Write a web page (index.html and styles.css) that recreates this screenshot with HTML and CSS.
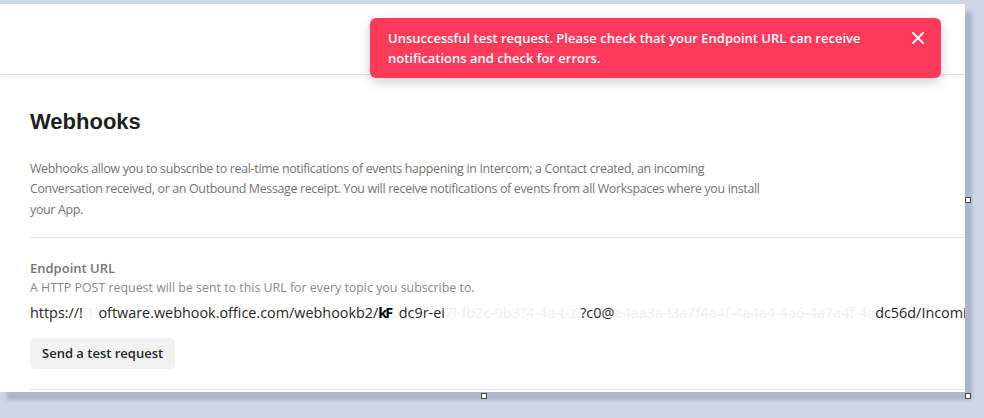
FILE: index.html
```html
<!DOCTYPE html>
<html lang="en">

<head>
    <meta charset="UTF-8">
    <meta name="viewport" content="width=device-width, initial-scale=1.0">
    <title>Webhooks</title>
    <link rel="stylesheet" href="styles.css">
</head>

<body>

    <div class="canvas">
        <div class="shot">
            <header class="topbar"></header>

            <div class="toast">
                <p>Unsuccessful test request. Please check that your Endpoint URL can receive notifications and check for errors.</p>
                <button class="toast-close" aria-label="Close">
                    <svg width="12" height="12" viewBox="0 0 12 12">
                        <path d="M1 1 L11 11 M11 1 L1 11" stroke="#fff" stroke-width="1.8" stroke-linecap="round" />
                    </svg>
                </button>
            </div>

            <main class="content">
                <h1>Webhooks</h1>
                <p class="intro">Webhooks allow you to subscribe to real-time notifications of events happening in Intercom; a Contact created, an incoming Conversation received, or an Outbound Message receipt. You will receive notifications of events from all Workspaces where you install your App.</p>

                <hr class="divider">

                <section class="endpoint">
                    <h2>Endpoint URL</h2>
                    <p class="hint">A HTTP POST request will be sent to this URL for every topic you subscribe to.</p>
                    <div class="url">https://!<span class="mask">l1l</span>oftware.webhook.office.com/webhookb2/<span class="ink">kF</span><span class="mask">..</span>dc9r-ei<span class="mask">7l-f</span><span class="mask">b2c-9b3?4-4a-t-zi</span>?c0@<span class="mask">e4aa3a-l3a7f4a4f-4a4a4-4a6-4a7a4f-4a</span>dc56d/Incomin</div>
                    <button class="btn">Send a test request</button>
                </section>

                <hr class="divider">
            </main>
        </div>

        <span class="handle handle-side"></span>
        <span class="handle handle-bottom"></span>
        <span class="handle handle-corner"></span>
    </div>

</body>

</html>
```

FILE: styles.css
```css
* {
    box-sizing: border-box;
}

body {
    margin: 0;
    padding-top: 4px;
    background-color: #cdd6e5;
    font-family: "Open Sans", "Noto Sans", sans-serif;
    overflow: hidden;
}

.canvas {
    position: relative;
    width: 984px;
    height: 414px;
}

.shot {
    position: relative;
    width: 965px;
    height: 388px;
    background-color: #ffffff;
    overflow: hidden;
    box-shadow: 7px 8px 3px rgba(110, 125, 155, 0.35);
}

.topbar {
    height: 71px;
    border-bottom: 1px solid #e2e2e2;
    box-shadow: 0 1px 4px rgba(0, 0, 0, 0.06);
}

/* error toast */
.toast {
    position: absolute;
    top: 14px;
    left: 370px;
    width: 571px;
    height: 60px;
    display: flex;
    align-items: flex-start;
    padding: 10px 17px 10px 18px;
    background-color: #ff3a5b;
    border-radius: 6px;
    box-shadow: 0 4px 12px rgba(0, 0, 0, 0.18);
    color: #ffffff;
}

.toast p {
    margin: 0;
    max-width: 510px;
    font-size: 13px;
    font-weight: 600;
    line-height: 20px;
}

.toast-close {
    margin-left: auto;
    margin-top: 4px;
    padding: 0;
    border: 0;
    background: none;
    line-height: 0;
}

.content {
    padding: 0 0 0 30px;
}

.content h1 {
    margin: 34px 0 0;
    font-family: "Liberation Sans", Arial, sans-serif;
    font-size: 22px;
    font-weight: bold;
    line-height: 26px;
    color: #1f1f1f;
}

.intro {
    max-width: 742px;
    margin: 24px 0 0;
    font-size: 12.4px;
    letter-spacing: -0.32px;
    line-height: 20.3px;
    color: #737373;
}

.divider {
    margin: 17px 0 0;
    border: 0;
    border-top: 1px solid #e6e6e6;
}

.endpoint {
    padding-top: 20px;
}

.endpoint h2 {
    margin: 0;
    font-size: 13px;
    font-weight: 600;
    line-height: 20px;
    color: #757575;
}

.hint {
    margin: 0;
    font-size: 12.4px;
    line-height: 20px;
    color: #8a8a8a;
}

.url {
    margin-top: 5px;
    font-size: 14.4px;
    line-height: 20px;
    color: #262626;
    white-space: nowrap;
}

.mask {
    color: #efefef;
}

.ink {
    color: #000000;
    font-weight: bold;
    letter-spacing: -2px;
}

.btn {
    margin-top: 15px;
    height: 31px;
    padding: 0 12px;
    border: 0;
    border-radius: 5px;
    background-color: #f1f1f1;
    font-family: "Open Sans", "Noto Sans", sans-serif;
    font-size: 13px;
    font-weight: 600;
    color: #262626;
}

.content .divider:last-child {
    margin-top: 20px;
}

/* selection handles of the pasted picture */
.handle {
    position: absolute;
    width: 6px;
    height: 6px;
    background-color: #ffffff;
    border: 1.5px solid #4a4a4a;
}

.handle-side {
    left: 965px;
    top: 193px;
}

.handle-bottom {
    left: 481px;
    top: 389px;
}

.handle-corner {
    left: 965px;
    top: 389px;
}
```
